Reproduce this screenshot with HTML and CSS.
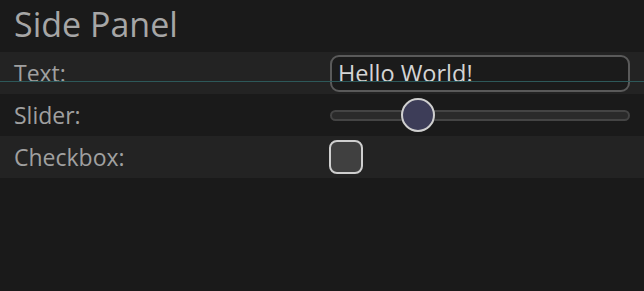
FILE: index.html
```html
<!DOCTYPE html>
<html>
<head>
<meta charset="utf-8">
<link rel="stylesheet" href="styles.css">
</head>
<body>
<div class="panel">
  <h1 class="title">Side Panel</h1>
  <div class="row row-alt">
    <span class="label">Text:</span>
    <div class="field"><span class="field-text">Hello World!</span></div>
  </div>
  <div class="row">
    <span class="label">Slider:</span>
    <div class="slider">
      <div class="track"></div>
      <div class="knob"></div>
    </div>
  </div>
  <div class="row row-alt">
    <span class="label">Checkbox:</span>
    <div class="check-wrap"><div class="checkbox"></div></div>
  </div>
  <div class="guide"></div>
</div>
</body>
</html>
```
FILE: styles.css
```css
html, body {
  margin: 0;
  padding: 0;
  background: #1a1a1a;
}
body {
  width: 644px;
  height: 291px;
  overflow: hidden;
  font-family: "Open Sans", "DejaVu Sans", sans-serif;
}
.panel {
  position: relative;
}
.title {
  margin: 0;
  height: 52px;
  padding-left: 14px;
  font-size: 34px;
  font-weight: 400;
  line-height: 48px;
  color: #a6a6a6;
  box-sizing: border-box;
}
.row {
  height: 42px;
  display: grid;
  grid-template-columns: 316px 1fr;
  align-items: center;
  padding: 0 14px;
  box-sizing: border-box;
}
.row-alt {
  background: #232323;
}
.label {
  font-size: 23px;
  color: #a0a0a0;
  line-height: 1;
}
.field {
  height: 37px;
  box-sizing: border-box;
  border: 2px solid #5a5a5a;
  border-radius: 9px;
  background: #1b1b1b;
  display: flex;
  align-items: center;
  padding-left: 6px;
  margin-top: 1px;
}
.field-text {
  font-size: 23.5px;
  color: #d4d4d4;
  line-height: 1;
}
.slider {
  position: relative;
  height: 34px;
  display: flex;
  align-items: center;
}
.track {
  width: 100%;
  height: 11px;
  box-sizing: border-box;
  border: 2px solid #444;
  border-radius: 6px;
  background: #2a2a2a;
}
.knob {
  position: absolute;
  left: 71px;
  top: 0px;
  width: 34px;
  height: 34px;
  box-sizing: border-box;
  border: 2px solid #cfcfcf;
  border-radius: 50%;
  background: #3d3d58;
}
.check-wrap {
  display: flex;
  align-items: center;
}
.checkbox {
  width: 34px;
  height: 34px;
  box-sizing: border-box;
  border: 2px solid #cfcfcf;
  border-radius: 8px;
  background: #404040;
  margin-left: -1px;
}
.guide {
  position: absolute;
  left: 0;
  right: 0;
  top: 81px;
  height: 1px;
  background: #2d5859;
}
```
